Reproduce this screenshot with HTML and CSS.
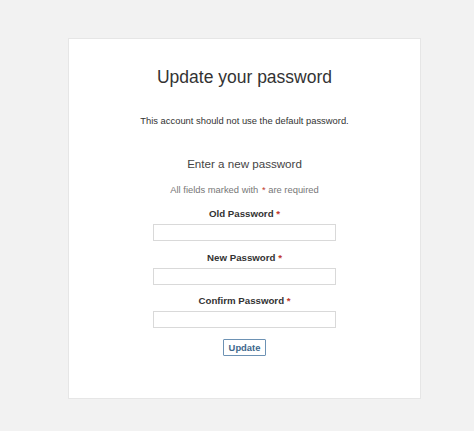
FILE: index.html
```html
<!DOCTYPE html>
<html lang="en">
<head>
    <meta charset="UTF-8">
    <meta name="viewport" content="width=device-width, initial-scale=1.0">
    <title>Update your password</title>
    <link rel="stylesheet" href="styles.css">
</head>
<body>
    <div class="card">
        <h1 class="title">Update your password</h1>
        <p class="notice">This account should not use the default password.</p>

        <h2 class="subtitle">Enter a new password</h2>
        <p class="hint">All fields marked with <span class="req">*</span> are required</p>

        <form class="form" onsubmit="return false;">
            <div class="field">
                <label for="oldPassword">Old Password <span class="req">*</span></label>
                <input type="password" id="oldPassword">
            </div>
            <div class="field">
                <label for="newPassword">New Password <span class="req">*</span></label>
                <input type="password" id="newPassword">
            </div>
            <div class="field">
                <label for="confirmPassword">Confirm Password <span class="req">*</span></label>
                <input type="password" id="confirmPassword">
            </div>
            <button type="submit" class="btn">Update</button>
        </form>
    </div>
</body>
</html>
```

FILE: styles.css
```css
/* reset */
* {
    margin: 0;
    padding: 0;
    box-sizing: border-box;
}

body {
    background-color: #f2f2f2;
    font-family: "Liberation Sans", Arial, sans-serif;
    color: #333;
    padding: 38px 0 0 68px;
}

.card {
    width: 353px;
    height: 361px;
    background: #fff;
    border: 1px solid #e6e6e6;
    padding-top: 27px;
    text-align: center;
}

.title {
    font-size: 17.5px;
    font-weight: normal;
    line-height: 22px;
    color: #333;
}

.notice {
    margin-top: 26px;
    font-size: 9.4px;
    line-height: 14px;
    color: #333;
}

.subtitle {
    margin-top: 28px;
    font-size: 11.6px;
    font-weight: normal;
    line-height: 16px;
    color: #444;
}

.hint {
    margin-top: 11px;
    font-size: 9.4px;
    line-height: 14px;
    color: #777;
}

.hint .req {
    margin-left: 1px;
}

.req {
    color: #c0392b;
}

.form {
    margin-top: 10px;
    display: flex;
    flex-direction: column;
    align-items: center;
    gap: 9.5px;
}

.field {
    display: flex;
    flex-direction: column;
    align-items: center;
    gap: 3px;
}

.field label {
    font-size: 9.7px;
    font-weight: bold;
    line-height: 14px;
    color: #333;
}

.field input {
    width: 183px;
    height: 17px;
    border: 1px solid #d9d9d9;
    background: #fff;
    outline: none;
}

.btn {
    margin-top: 1px;
    width: 43px;
    height: 17px;
    background: #fff;
    border: 1px solid #6d92b4;
    border-radius: 1px;
    color: #40688c;
    font-family: "Liberation Sans", Arial, sans-serif;
    font-size: 9.4px;
    font-weight: bold;
    cursor: pointer;
}
```
